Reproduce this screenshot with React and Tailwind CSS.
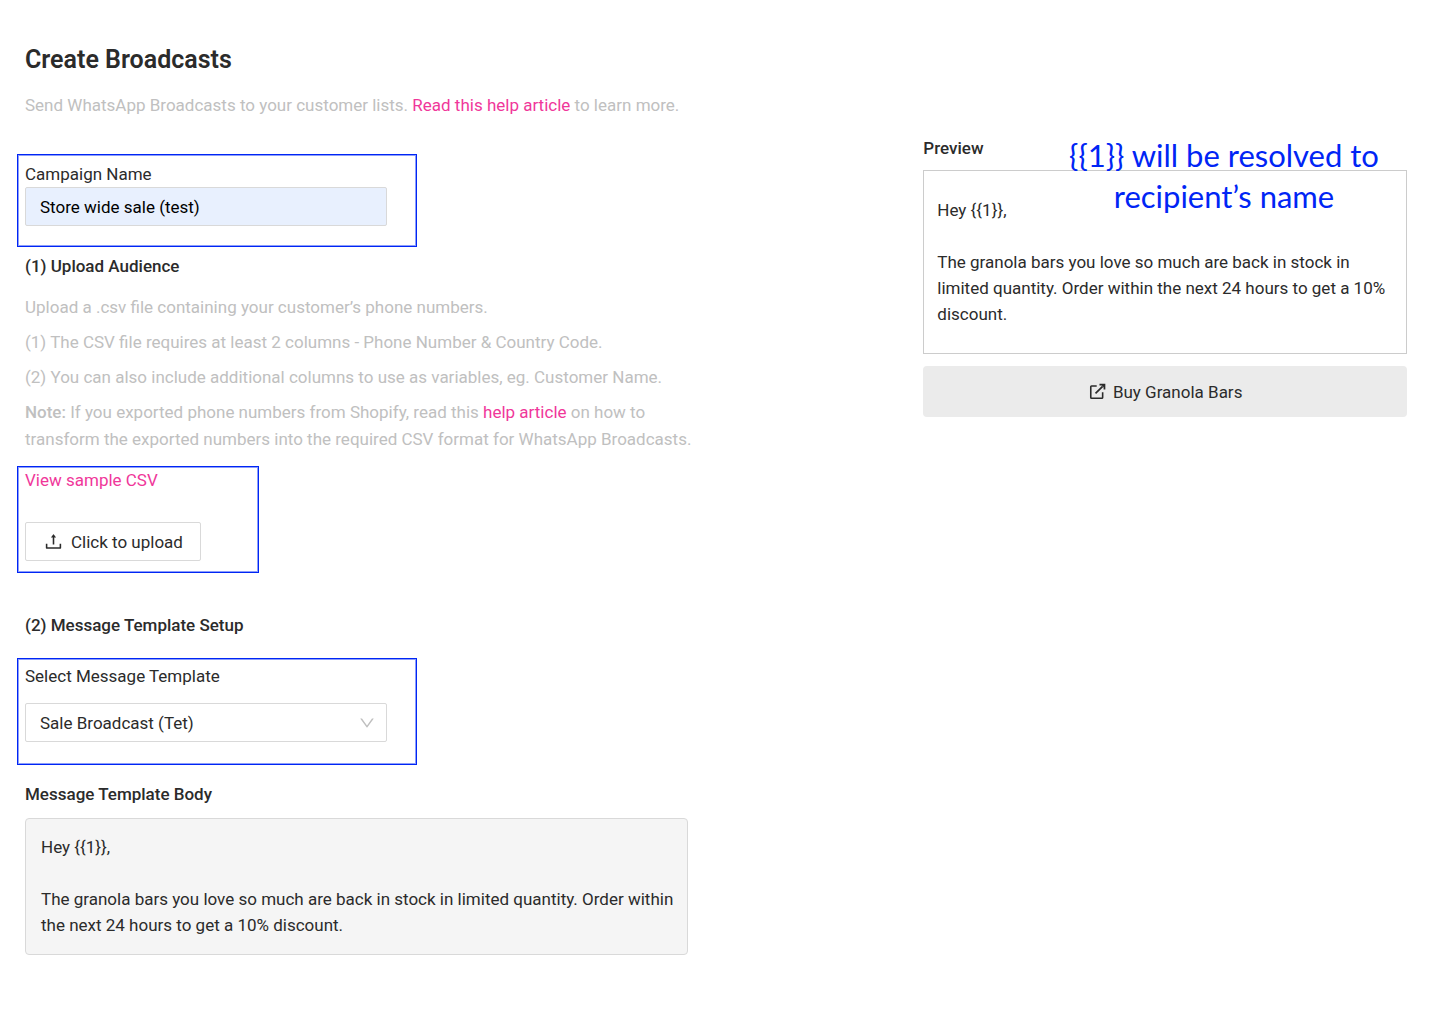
import React, { useState } from "react";
import { AiOutlineUpload, AiOutlineDown } from "react-icons/ai";

const messageBody = `Hey {{1}},

The granola bars you love so much are back in stock in limited quantity. Order within the next 24 hours to get a 10% discount.`;

const templates = ["Sale Broadcast (Tet)"];

const ExternalLinkIcon = () => (
  <svg width="19" height="19" viewBox="0 0 24 24" fill="none" stroke="currentColor" aria-hidden="true">
    <path
      d="M11 5H4.500a1 1 0 0 0-1 1v13.500a1 1 0 0 0 1 1H17.500a1 1 0 0 0 1-1V13"
      strokeWidth="2"
    />
    <path d="M9.500 14.500 18.500 5.500" strokeWidth="2.200" />
    <path d="M14.500 3.200h6.300v6.300" strokeWidth="2.200" />
    <path d="M16.500 3.200h4.300v4.300z" fill="currentColor" stroke="none" />
  </svg>
);

const Highlight = ({ className, children }) => (
  <div
    className={`-ml-2 border border-[#0025f5] px-[7px] inset-ring inset-ring-[#8c9dfb] ${className}`}
  >
    {children}
  </div>
);

const PinkLink = ({ children }) => (
  <a href="#" className="text-[#f0379a] hover:underline">
    {children}
  </a>
);

const App = () => {
  const [name, setName] = useState("Store wide sale (test)");
  const [template, setTemplate] = useState(templates[0]);

  return (
    <main className="bg-white pt-11 pr-[33px] pb-16 pl-[25px] font-['Roboto',sans-serif] text-[17px] leading-[26px] text-[#2b2b2b]">
      <div className="flex items-start justify-between">
        <div className="w-[48%]">
          <h1 className="text-[25px] leading-8 font-semibold">Create Broadcasts</h1>
          <p className="mt-4 whitespace-nowrap text-[#c0c0c0]">
            Send WhatsApp Broadcasts to your customer lists.{" "}
            <PinkLink>Read this help article</PinkLink> to learn more.
          </p>

          <Highlight className="mt-9 w-[400px] pt-[6px] pb-5">
            <label htmlFor="campaign-name" className="block">
              Campaign Name
            </label>
            <input
              id="campaign-name"
              type="text"
              value={name}
              onChange={(e) => setName(e.target.value)}
              className="block h-[39px] w-[362px] rounded-xs border border-[#d9d9d9] bg-[#e8f0fe] px-[14px] text-black outline-none"
            />
          </Highlight>

          <h2 className="mt-[6px] font-medium">(1) Upload Audience</h2>
          <div className="-mr-3 mt-[15px] flex flex-col gap-2 leading-[27px] text-[#c0c0c0]">
            <p>Upload a .csv file containing your customer’s phone numbers.</p>
            <p>(1) The CSV file requires at least 2 columns - Phone Number &amp; Country Code.</p>
            <p>(2) You can also include additional columns to use as variables, eg. Customer Name.</p>
            <p>
              <strong className="font-medium">Note:</strong> If you exported phone numbers from
              Shopify, read this <PinkLink>help article</PinkLink> on how to transform the exported
              numbers into the required CSV format for WhatsApp Broadcasts.
            </p>
          </div>

          <Highlight className="mt-[13px] w-[242px] pb-[11px]">
            <PinkLink>View sample CSV</PinkLink>
            <button
              type="button"
              className="mt-[29px] flex h-[39px] items-center gap-[7px] rounded-xs border border-[#d9d9d9] bg-white px-[17px]"
            >
              <AiOutlineUpload size={21} />
              Click to upload
            </button>
          </Highlight>

          <h2 className="mt-[39px] font-medium">(2) Message Template Setup</h2>

          <Highlight className="mt-5 w-[400px] pt-1 pb-[22px]">
            <label htmlFor="template" className="block">
              Select Message Template
            </label>
            <div className="relative mt-[14px] w-[362px]">
              <select
                id="template"
                value={template}
                onChange={(e) => setTemplate(e.target.value)}
                className="block h-[39px] w-full appearance-none rounded-xs border border-[#d9d9d9] bg-white px-[14px] outline-none"
              >
                {templates.map((item) => (
                  <option key={item}>{item}</option>
                ))}
              </select>
              <AiOutlineDown
                size={18}
                className="pointer-events-none absolute top-[11px] right-[11px] text-[#bfbfbf]"
              />
            </div>
          </Highlight>

          <label htmlFor="template-body" className="mt-4 block font-medium">
            Message Template Body
          </label>
          <textarea
            id="template-body"
            readOnly
            rows={4}
            value={messageBody}
            className="mt-[11px] block w-full resize-none overflow-hidden rounded-[4px] border border-[#d9d9d9] bg-[#f5f5f5] pt-[15px] pr-2 pb-4 pl-[15px] outline-none"
          />
        </div>

        <section className="relative mt-[91px] w-[35%]">
          <h2 className="font-medium">Preview</h2>
          <div className="mt-[9px] border border-[#cccccc] px-[13px] py-[26px] whitespace-pre-line">
            {messageBody}
          </div>
          <button
            type="button"
            className="mt-3 flex h-[51px] w-full items-center justify-center gap-[6px] rounded-[4px] bg-[#ebebeb]"
          >
            <ExternalLinkIcon />
            Buy Granola Bars
          </button>
          <p className="absolute top-0 right-0 w-[366px] text-center font-['Lato',sans-serif] text-[31px] leading-[41px] text-[#0025f5]">
            {"{{1}}"} will be resolved to
            <br />
            recipient’s name
          </p>
        </section>
      </div>
    </main>
  );
};

export default App;
